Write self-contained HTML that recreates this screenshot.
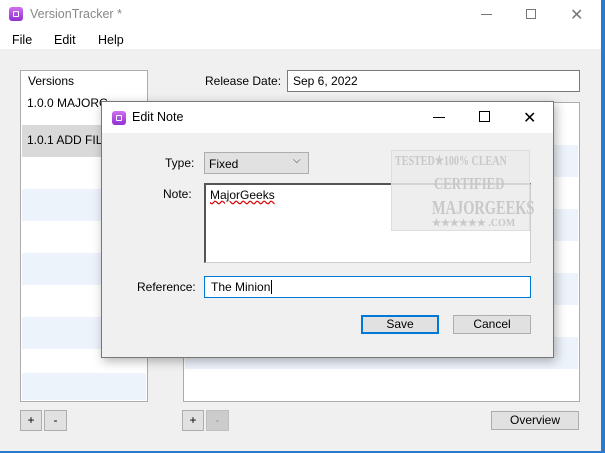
<!DOCTYPE html>
<html><head><style>
*{box-sizing:border-box;margin:0;padding:0}
body{width:605px;height:453px;overflow:hidden;background:#f0f0f0;font-family:"Liberation Sans",sans-serif;font-size:12px;color:#000;position:relative}
.a{position:absolute}
.row{position:absolute;left:1px;right:1px;height:32px}
.btn{position:absolute;background:#e1e1e1;border:1px solid #adadad;text-align:center;font-size:12px}
.wm div{white-space:nowrap;transform-origin:left top}
</style></head><body>
<div class="a" style="left:0;top:0;width:605px;height:49px;background:#fff"></div>
<div class="a" style="left:9px;top:7px;width:14px;height:14px;border-radius:3px;background:linear-gradient(#d070f0,#9030d0)"></div>
<div class="a" style="left:13px;top:11px;width:6px;height:6px;border:1px solid #fff;border-radius:1px"></div>
<div class="a" style="left:30px;top:7px;color:#888;font-size:12.5px">VersionTracker *</div>
<div class="a" style="left:481px;top:14px;width:11px;height:1px;background:#777"></div>
<div class="a" style="left:526px;top:9px;width:10px;height:10px;border:1px solid #777"></div>
<div class="a" style="left:570px;top:5px;color:#777;font-size:16px">✕</div>
<div class="a" style="left:12px;top:33px;font-size:12.5px">File</div>
<div class="a" style="left:54px;top:33px;font-size:12.5px">Edit</div>
<div class="a" style="left:98px;top:33px;font-size:12.5px">Help</div>
<div class="a" style="left:601px;top:0;width:4px;height:453px;background:#2a7ad0"></div>
<div class="a" style="left:0;top:451px;width:605px;height:2px;background:#2a7ad0"></div>

<!-- left list -->
<div class="a" style="left:20px;top:70px;width:128px;height:332px;background:#fff;border:1px solid #adadad">
<div class="a" style="left:7px;top:3px">Versions</div>
<div class="a" style="left:6px;top:25px">1.0.0 MAJORG</div>
<div class="row" style="top:54px;background:#d9d9d9"><span class="a" style="left:5px;top:8px">1.0.1 ADD FILE</span></div>
<div class="row" style="top:118px;background:#edf3fb"></div>
<div class="row" style="top:182px;background:#edf3fb"></div>
<div class="row" style="top:246px;background:#edf3fb"></div>
<div class="row" style="top:302px;height:27px;background:#edf3fb"></div>
</div>
<div class="a" style="left:205px;top:74px">Release Date:</div>
<div class="a" style="left:287px;top:70px;width:293px;height:22px;background:#fff;border:1px solid #7a7a7a;padding:3px 5px">Sep 6, 2022</div>
<div class="a" style="left:183px;top:102px;width:397px;height:300px;background:#fff;border:1px solid #adadad">
<div class="row" style="top:42px;background:#edf3fb"></div>
<div class="row" style="top:106px;background:#edf3fb"></div>
<div class="row" style="top:170px;background:#edf3fb"></div>
<div class="row" style="top:234px;background:#edf3fb"></div>
</div>
<div class="btn" style="left:20px;top:410px;width:22px;height:21px;line-height:19px">+</div>
<div class="btn" style="left:44px;top:410px;width:23px;height:21px;line-height:19px">-</div>
<div class="btn" style="left:182px;top:410px;width:22px;height:21px;line-height:19px">+</div>
<div class="btn" style="left:206px;top:410px;width:23px;height:21px;line-height:19px;background:#ccc;border-color:#bfbfbf;color:#999">-</div>
<div class="btn" style="left:491px;top:411px;width:88px;height:19px;line-height:17px">Overview</div>

<!-- dialog -->
<div class="a" style="left:101px;top:101px;width:453px;height:257px;background:#f0f0f0;border:1px solid #777;box-shadow:2px 3px 10px rgba(0,0,0,.3)">
<div class="a" style="left:0;top:0;width:451px;height:31px;background:#fff"></div>
<div class="a" style="left:10px;top:9px;width:14px;height:14px;border-radius:3px;background:linear-gradient(#d070f0,#9030d0)"></div>
<div class="a" style="left:14px;top:13px;width:6px;height:6px;border:1px solid #fff;border-radius:1px"></div>
<div class="a" style="left:30px;top:8px;font-size:12.5px">Edit Note</div>
<div class="a" style="left:331px;top:15px;width:12px;height:1px;background:#000"></div>
<div class="a" style="left:377px;top:9px;width:11px;height:11px;border:1px solid #000"></div>
<div class="a" style="left:421px;top:6px;font-size:16px">✕</div>
</div>
<div class="a" style="left:165px;top:156px">Type:</div>
<div class="a" style="left:204px;top:152px;width:105px;height:22px;background:#e1e1e1;border:1px solid #adadad;padding:4px 4px">Fixed<span class="a" style="left:88px;top:2px;font-size:10px;color:#333">⌵</span></div>
<div class="a" style="left:163px;top:187px">Note:</div>
<div class="a" style="left:204px;top:183px;width:327px;height:80px;background:#fff;border:1px solid #ccc;border-top:2px solid #555;border-left:2px solid #555;padding:3px 4px"><span style="text-decoration:underline wavy #d00">MajorGeeks</span></div>
<div class="a wm" style="left:391px;top:150px;width:139px;height:81px;background:rgba(235,235,235,.85);border:1px solid #ddd;color:#c8c8c8;font-family:'Liberation Serif',serif;font-weight:bold;line-height:1">
<div class="a" style="left:3px;top:4px;font-size:14px;transform:scaleX(.72)">TESTED★100% CLEAN</div>
<div class="a" style="left:42px;top:24px;font-size:17px;transform:scaleX(.75)">CERTIFIED</div>
<div class="a" style="left:40px;top:47px;font-size:20px;transform:scaleX(.72)">MAJORGEEKS</div>
<div class="a" style="left:40px;top:68px;font-size:10px">★★★★★★ .COM</div>
</div>
<div class="a" style="left:137px;top:280px">Reference:</div>
<div class="a" style="left:204px;top:276px;width:327px;height:22px;background:#fff;border:1px solid #0078d7;padding:3px 6px">The Minion<span style="border-left:1px solid #000;margin-left:1px"></span></div>
<div class="btn" style="left:361px;top:315px;width:78px;height:19px;line-height:15px;border:2px solid #0078d7">Save</div>
<div class="btn" style="left:453px;top:315px;width:78px;height:19px;line-height:17px">Cancel</div>
</body></html>
